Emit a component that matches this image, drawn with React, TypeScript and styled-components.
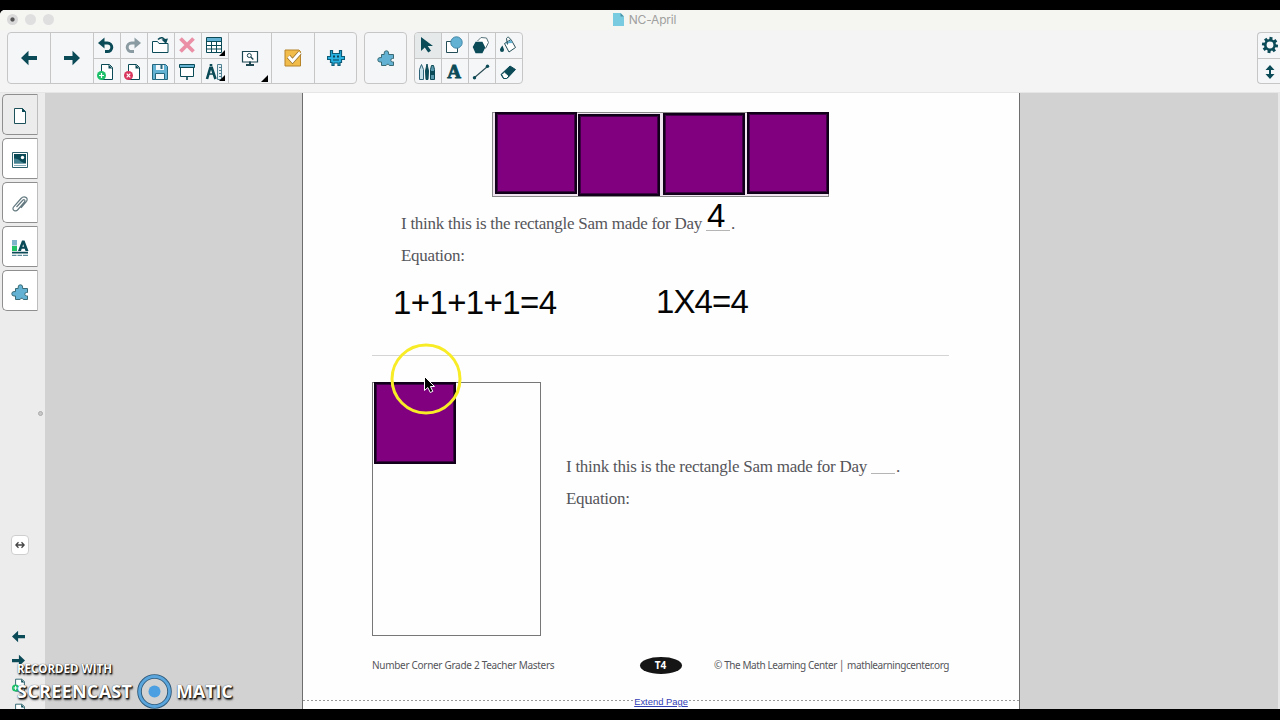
import React from "react";
import styled, { createGlobalStyle } from "styled-components";

const INK = "#0b4a57";
const BLUE = "#63b2d4";

const GlobalStyle = createGlobalStyle`
  * { box-sizing: border-box; }
  body { margin: 0; background: #000; overflow: hidden; }
`;

const Screen = styled.div`
  position: relative;
  width: 1280px;
  height: 720px;
  padding: 10px 0 11px;
  background: #000;
  font-family: "Liberation Sans", Arial, sans-serif;
`;

const Window = styled.div`
  height: 699px;
  display: flex;
  flex-direction: column;
  background: #f4f4f4;
  border-radius: 5px 0 0 0;
  overflow: hidden;
`;

const TitleBar = styled.header`
  height: 20px;
  flex: none;
  display: grid;
  grid-template-columns: 1fr auto 1fr;
  align-items: center;
  background: #f5f6f2;
`;

const TrafficLights = styled.div`
  display: flex;
  gap: 7px;
  padding: 0 0 2px 7px;
`;

const Light = styled.span<{ $dot?: boolean }>`
  width: 11px;
  height: 11px;
  border-radius: 50%;
  background: ${(p) =>
    p.$dot ? "radial-gradient(circle, #555 0 1.6px, #d9d9d9 2.6px)" : "#dfdfdf"};
`;

const Title = styled.div`
  display: flex;
  align-items: center;
  gap: 5px;
  padding: 0 0 2px 9px;
  color: #a0a09e;
  font: 12px Inter, sans-serif;
  letter-spacing: -0.2px;
`;

const Toolbar = styled.div`
  height: 62px;
  flex: none;
  display: flex;
  align-items: flex-start;
  padding: 2px 0 0 7px;
  background: #f4f4f4;
`;

const Group = styled.div<{ $ml?: string; $open?: boolean }>`
  display: flex;
  height: 52px;
  margin-left: ${(p) => p.$ml ?? "0"};
  margin-right: ${(p) => (p.$open ? "-4px" : "0")};
  border: 1px solid #c6c6c6;
  border-right-width: ${(p) => (p.$open ? 0 : "1px")};
  border-radius: ${(p) => (p.$open ? "4px 0 0 4px" : "4px")};
  background: #f5f6f8;
  overflow: hidden;
`;

const Cell = styled.button<{ $w: number }>`
  position: relative;
  width: ${(p) => p.$w}px;
  flex: 1 0 auto;
  padding: 0 1px 0 0;
  border: 0;
  border-right: 1px solid #c6c6c6;
  background: transparent;
  display: grid;
  place-items: center;
  &:last-child { border-right: 0; padding: 0; }
`;

const Stack = styled.div`
  width: 27px;
  display: grid;
  grid-template-rows: 26px 24px;
  border-right: 1px solid #c6c6c6;
  &:last-child { border-right: 0; width: 26px; }
`;

const SmallCell = styled.button<{ $active?: boolean }>`
  position: relative;
  padding: 2px 2px 0 0;
  border: 0;
  background: ${(p) => (p.$active ? "#e6e9e9" : "transparent")};
  display: grid;
  place-items: center;
  &:first-child {
    padding-top: 0;
    padding-bottom: 1px;
    border-bottom: 1px solid #c6c6c6;
  }
`;

const Corner = styled.i<{ $size?: number }>`
  position: absolute;
  right: 3px;
  bottom: ${(p) => (p.$size ? 1 : 2)}px;
  width: ${(p) => p.$size ?? 6}px;
  height: ${(p) => p.$size ?? 6}px;
  background: #000;
  clip-path: polygon(100% 0, 100% 100%, 0 100%);
`;

const Body = styled.div`
  flex: 1;
  min-height: 0;
  display: flex;
  border-top: 1px solid #e6e6e6;
`;

const Sidebar = styled.aside`
  width: 45px;
  flex: none;
  display: flex;
  flex-direction: column;
  background: #ececec;
  padding: 1px 0 0 2px;
`;

const Tab = styled.button<{ $active?: boolean }>`
  width: 36px;
  height: 41px;
  flex: none;
  margin-bottom: 3px;
  padding: 2px 0 0 0;
  border: 1px solid #8f8f8f;
  border-right-color: #bdbdbd;
  border-radius: 5px 0 0 5px;
  background: ${(p) => (p.$active ? "#ececec" : "#fff")};
  display: grid;
  place-items: center;
`;

const Grip = styled.i`
  width: 5px;
  height: 5px;
  margin: 97px 0 0 36px;
  border: 1px solid #aaa;
  border-radius: 50%;
  background: #c8c8c8;
`;

const WidthToggle = styled.button`
  width: 18px;
  height: 20px;
  flex: none;
  margin: 119px 0 0 9px;
  padding: 0;
  border: 1px solid #cfcfcf;
  border-radius: 4px;
  background: #fff;
  display: grid;
  place-items: center;
`;

const PageActions = styled.div`
  display: flex;
  flex-direction: column;
  gap: 11px;
  margin: 75px 0 0 10px;
  height: 79px;
  overflow: hidden;
  svg { flex: none; }
`;

const Desk = styled.main`
  flex: 1;
  display: flex;
  background: #d2d2d2;
  border-right: 2px solid #e8e8e8;
`;

const Page = styled.article`
  position: relative;
  width: 718px;
  margin-left: 257px;
  flex: none;
  background: #fefefe;
  border-left: 1px solid #6e6e6e;
  border-right: 1px solid #6e6e6e;
  padding: 19px 70px 0 69px;
  display: flex;
  flex-direction: column;
`;

const StripFrame = styled.div`
  display: flex;
  align-items: flex-start;
  width: 337px;
  height: 85px;
  margin-left: 120px;
  border: 1px solid #8a8a8a;
  background: #efe4ef;
  padding-left: 2px;
`;

const Tile = styled.div<{ $mt?: number; $ml?: number }>`
  flex: none;
  width: 82px;
  height: 82px;
  margin: ${(p) => p.$mt ?? 0}px 0 0 ${(p) => p.$ml ?? 0}px;
  border: 2px solid #12001a;
  background: #800080;
  box-shadow: inset 0 0 0 1px #3d0042;
`;

const Serif = styled.p`
  margin: 0;
  height: 32px;
  line-height: 32px;
  white-space: nowrap;
  color: #55555a;
  font-family: "Liberation Serif", "Times New Roman", serif;
  font-size: 17px;
  letter-spacing: -0.26px;
`;

const Prompt = styled.div<{ $ml?: number; $mt?: number }>`
  margin: ${(p) => p.$mt ?? 0}px 0 0 ${(p) => p.$ml ?? 0}px;
`;

const Blank = styled.span`
  position: relative;
  display: inline-block;
  width: 24px;
  height: 18px;
  margin: 0 1px 0 0;
  vertical-align: -2px;
  border-bottom: 1px solid #b5b5b5;
`;

const Answer = styled.span`
  position: absolute;
  left: 1px;
  bottom: -1px;
  color: #000;
  font: 33px/30px "Liberation Sans", Arial, sans-serif;
`;

const Equations = styled.div`
  display: flex;
  height: 38px;
  margin: 12px 0 0 21px;
  color: #050505;
  font-size: 33px;
  line-height: 38px;
  white-space: nowrap;
`;

const Equation = styled.span<{ $spacing: number; $w?: number; $up?: number }>`
  width: ${(p) => (p.$w ? `${p.$w}px` : "auto")};
  letter-spacing: ${(p) => p.$spacing}px;
  margin-top: -${(p) => p.$up ?? 0}px;
`;

const Rule = styled.hr`
  width: 577px;
  height: 1px;
  flex: none;
  margin: 33px 0 0;
  border: 0;
  background: #d4d4d4;
`;

const Problem = styled.section`
  display: flex;
  margin-top: 26px;
`;

const TallFrame = styled.div`
  width: 169px;
  height: 254px;
  flex: none;
  border: 1px solid #777;
`;

const Footer = styled.footer`
  display: grid;
  grid-template-columns: 1fr 42px 1fr;
  align-items: center;
  height: 18px;
  margin-top: 20px;
  width: 577px;
  color: #55555a;
  font: 10px "Noto Sans", sans-serif;
  white-space: nowrap;
`;

const FootLeft = styled.span`
  letter-spacing: -0.3px;
`;

const FootRight = styled.span`
  text-align: right;
  letter-spacing: -0.42px;
`;

const Badge = styled.span`
  height: 17px;
  border-radius: 50%;
  background: #151515;
  color: #fff;
  font-weight: 700;
  font-size: 10px;
  line-height: 17px;
  text-align: center;
`;

const Extend = styled.div`
  display: flex;
  align-items: center;
  gap: 1px;
  height: 14px;
  margin: 21px -70px 0 -69px;
  color: #3341b5;
  font-size: 9.4px;
  line-height: 14px;
  text-decoration: underline;
  &::before, &::after {
    content: "";
    flex: 1;
    height: 1px;
    margin-bottom: 3px;
    background: repeating-linear-gradient(90deg, #999 0 2px, transparent 2px 4px);
  }
`;

const Pointer = styled.svg`
  position: absolute;
  left: 389px;
  top: 342px;
`;

const Watermark = styled.div`
  position: absolute;
  left: 17px;
  top: 661px;
  color: #fff;
  font-family: "Open Sans", "Noto Sans", sans-serif;
  font-weight: 700;
  text-shadow: 1px 1px 1px #111, 1px 2px 2px #333, 0 0 1px #333;
  white-space: nowrap;
`;

const MarkTop = styled.div`
  height: 15px;
  font-size: 11.5px;
  line-height: 15px;
`;

const MarkRow = styled.div`
  display: flex;
  align-items: center;
  height: 34px;
  margin-top: -2px;
  font-size: 18px;
  line-height: 34px;
`;

const MarkWord = styled.span<{ $w: number; $spacing: number }>`
  width: ${(p) => p.$w}px;
  letter-spacing: ${(p) => p.$spacing}px;
`;

const Ring = styled.svg`
  margin: 0 4px 0 3px;
`;

const Drawing = styled.svg`
  display: block;
`;

const Svg = ({
  w = 18,
  h = 18,
  scale = 1,
  children,
}: {
  w?: number;
  h?: number;
  scale?: number;
  children: React.ReactNode;
}) => (
  <Drawing width={w * scale} height={h * scale} viewBox={`0 0 ${w} ${h}`} fill="none">
    {children}
  </Drawing>
);

const ArrowLeft = ({ s = 16 }: { s?: number }) => (
  <Drawing width={s} height={s} viewBox="0 0 16 16">
    <path d="M0 8 7.5 0.8V6H16v4H7.5v5.2z" fill={INK} />
  </Drawing>
);
const ArrowRight = ({ s = 16 }: { s?: number }) => (
  <Drawing width={s} height={s} viewBox="0 0 16 16">
    <path d="M16 8 8.5 0.8V6H0v4h8.5v5.2z" fill={INK} />
  </Drawing>
);
const Undo = () => (
  <Svg w={16} h={17}>
    <path d="M5 6h4.5a4.2 4.2 0 0 1 0 8.6H7" stroke={INK} strokeWidth="3" />
    <path d="M0 6 6.5 0.5v11z" fill={INK} />
  </Svg>
);
const Redo = () => (
  <Svg w={16} h={17}>
    <path d="M11 6H6.5a4.2 4.2 0 0 0 0 8.6H9" stroke="#8b9ba2" strokeWidth="3" />
    <path d="M16 6 9.5 0.5v11z" fill="#8b9ba2" />
  </Svg>
);
const OpenFile = () => (
  <Svg>
    <path d="M1.5 16.5v-11h5l1.5 2h9v9z" fill="#fff" stroke={INK} />
    <path d="M7 3.5c3-3 6-2 7 1.500" stroke={INK} strokeWidth="1.6" />
    <path d="m10.5 3.500 6.5-1-2 5.500z" fill={INK} />
  </Svg>
);
const Cross = () => (
  <Svg w={16} h={16}>
    <path d="m1.5 1.500 13 13m0-13-13 13" stroke="#ea8fa6" strokeWidth="3.800" />
  </Svg>
);
const TableIcon = () => (
  <Svg>
    <path d="M1.500 1.500h15v15h-15z" fill="#fff" stroke={INK} />
    <path d="M2 2h14v3.500H2z" fill={BLUE} />
    <path d="M1.500 5.500h15m-15 4h15m-15 3.500h15M6.500 5.500v11m5-11v11" stroke={INK} />
  </Svg>
);
const PageShape = () => (
  <>
    <path d="M4.500 1.500h8l3 3v12h-11z" fill="#fff" stroke={INK} />
    <path d="M11.500 1.500v4h4z" fill={INK} />
  </>
);
const PageAdd = ({ scale }: { scale?: number }) => (
  <Svg scale={scale}>
    <PageShape />
    <circle cx="4.500" cy="12.500" r="4.500" fill="#1fc06a" />
    <path d="M4.500 10v5M2 12.500h5" stroke="#fff" strokeWidth="1.200" />
  </Svg>
);
const PageDelete = ({ scale }: { scale?: number }) => (
  <Svg scale={scale}>
    <PageShape />
    <circle cx="4.500" cy="12.500" r="4.500" fill="#d8365c" />
    <path d="m2.700 10.700 3.600 3.600m0-3.600-3.600 3.600" stroke="#fff" strokeWidth="1.200" />
  </Svg>
);
const Save = () => (
  <Svg>
    <path d="M1.500 1.500h13l2 2v13h-15z" fill={BLUE} stroke="#25667f" />
    <path d="M5 2h8v5H5z" fill="#f4f8fa" />
    <path d="M9.500 2h2v4h-2z" fill="#25667f" />
    <path d="M4.500 10.500h9v6h-9z" fill="#f4f8fa" stroke="#25667f" />
  </Svg>
);
const Projector = () => (
  <Svg>
    <path d="M2.500 4.500h13v9h-13z" fill="#fff" stroke={INK} />
    <path d="M1.500 1.500h15v3h-15z" fill={BLUE} stroke={INK} />
    <path d="M9 13v4" stroke={INK} strokeWidth="1.600" />
  </Svg>
);
const Compass = () => (
  <Svg w={19}>
    <path d="M6 1v2.500M5.500 4 2 16M6.500 4l4 12" stroke={INK} strokeWidth="2.600" />
    <path d="M3.500 11h5" stroke={INK} strokeWidth="1.300" />
    <path d="M12.500 1.500h4v15h-4z" fill="#e9f1f4" stroke="#4f8193" />
    <path d="M14 4.500h2m-2 3h2m-2 3h2m-2 3h2" stroke="#4f8193" />
  </Svg>
);
const Monitor = () => (
  <Svg>
    <path d="M1.500 2.500h15v10.500h-15z" fill="#fff" stroke="#1c4650" strokeWidth="1.200" />
    <circle cx="8.300" cy="6.500" r="2" stroke="#1c4650" />
    <path d="m9.800 8 2.500 2.500" stroke="#1c4650" strokeWidth="1.400" />
    <path d="M9 12.500v3m-4 .5h8" stroke="#1c4650" strokeWidth="2" />
  </Svg>
);
const CheckBox = () => (
  <Svg>
    <path d="M1 1h14l1.500 1.500V17H1z" fill="#f2bc4b" stroke="#b7842a" />
    <path d="m4.500 7.500 4 4.500L16 3.500" stroke="#94702c" strokeWidth="4.400" />
    <path d="m4.500 7.500 4 4.500L16 3.500" stroke="#fff" strokeWidth="3" />
  </Svg>
);
const Monster = () => (
  <Svg>
    <path
      d="M3.500 1.500h2v3h7v-3h2v6h3v3h-3v3h-1.500v3h-2v-2.500H7v2.500H5v-3H3.500v-3h-3v-3h3z"
      fill="#28b2e2"
      stroke="#0d5c78"
      strokeWidth="1.200"
    />
    <path d="M6 6.500h2v2H6zm4 0h2v2h-2z" fill="#0b4258" />
    <path d="M6 11h6" stroke="#0b4258" />
  </Svg>
);
const Puzzle = () => (
  <Svg>
    <path
      d="M4.500 5.500h2.700v-1.500a2.200 2.200 0 1 1 4.400 0v1.500h4.900v4h-1a1.700 1.700 0 1 0 0 3.400h1v3.600h-4.200l-.8-1.200h-1.600l-.8 1.200H4.500v-3.500H3a2.200 2.200 0 1 1 0-4.400h1.500z"
      fill={BLUE}
      stroke="#3a6b75"
    />
  </Svg>
);
const Cursor = () => (
  <Svg w={14} h={16}>
    <path d="M1 0v14l3.800-3.600 3.400 5.200 2.800-1.900-3.300-4.700H13z" fill={INK} />
  </Svg>
);
const Shapes = () => (
  <Svg>
    <path d="M1.500 5.500h11v11h-11z" fill="#fff" stroke="#244e57" />
    <circle cx="11.500" cy="6.500" r="5.700" fill={BLUE} stroke="#4286a4" />
  </Svg>
);
const Polygons = () => (
  <Svg>
    <path d="m5.500 5 3.500-3.500 5.500.5 2 4.500-3 6" fill="#fff" stroke="#57737a" />
    <path d="m1.500 11 2.500-4.500h6l2.500 5-2.500 5H4z" fill={INK} stroke={INK} strokeWidth="1.400" />
  </Svg>
);
const Bucket = () => (
  <Svg>
    <path d="m5.500 7.500 6.500-4 4.500 8-6.500 4.500z" fill="#fff" stroke="#244e57" />
    <path d="m6 7.500 6-3.500 1.500 3z" fill={BLUE} />
    <path d="M8.500 8.500 7.500 2.500c1-2 3-1.500 3.500.5" stroke="#244e57" />
    <path d="M3.500 9.500c-1.500 2-2.500 3-2.500 4.500a2 2 0 0 0 4 0c0-1.500-1-2.500-1.500-4.500z" fill={INK} />
  </Svg>
);
const Pens = () => (
  <Svg>
    <path d="M1.500 16.500v-10l2-5 2 5v10z" fill="#c7dfe9" stroke="#2c6377" />
    <path d="M7.500 8 9 1l1.500 7-.5 8.500H8z" fill={INK} stroke={INK} />
    <path d="M12.500 16.500v-10l1-4h2l1 4v10z" fill="#5a98ae" stroke={INK} />
    <path d="M12.500 8h4v4h-4z" fill={INK} />
  </Svg>
);
const LetterA = styled.span`
  color: ${INK};
  font: 700 19px/18px "Liberation Serif", serif;
  -webkit-text-stroke: 0.9px ${INK};
`;
const LineIcon = () => (
  <Svg>
    <path d="M2 15 16 3" stroke="#294b53" strokeWidth="1.100" />
    <circle cx="2.500" cy="14.700" r="1.700" fill={INK} />
    <circle cx="15.500" cy="3.300" r="1.700" fill={INK} />
  </Svg>
);
const Eraser = () => (
  <Svg>
    <path d="m2 11.500 9-8.500 5.500 3.500-8.500 9H4.500z" fill={INK} stroke={INK} />
    <path d="m2.500 11.500 3-2.500 4.500 4-2.500 2.500H4.800z" fill="#fff" stroke={INK} />
  </Svg>
);
const Gear = () => (
  <Svg>
    {[0, 45, 90, 135].map((a) => (
      <path key={a} d="M9 1v16" stroke={INK} strokeWidth="3" transform={`rotate(${a + 8} 9 9)`} />
    ))}
    <circle cx="9" cy="9" r="4.700" fill="#f5f6f8" stroke={INK} strokeWidth="2.600" />
  </Svg>
);
const UpDown = () => (
  <Svg w={10} h={14}>
    <path d="M5 3v8" stroke={INK} strokeWidth="2" />
    <path d="m5 0 4.500 5h-9zM5 14l4.500-5h-9z" fill={INK} />
  </Svg>
);
const LeftRight = () => (
  <Svg w={10} h={8}>
    <path d="M1 4h8M3.500 1.200.8 4l2.700 2.800M6.500 1.200 9.200 4 6.500 6.800" stroke="#444" strokeWidth="1.300" />
  </Svg>
);
const SidePage = () => (
  <Svg w={14} h={18}>
    <path d="M1.500 1.500h8l3 3v12h-11z" fill="#fff" stroke="#1f515b" />
    <path d="M9 1v4h4z" fill={INK} />
  </Svg>
);
const Gallery = () => (
  <Svg>
    <path d="M1.500 1.500h15v15h-15z" fill="#fff" stroke="#2c606d" />
    <path d="M3 3h12v9.500H3z" fill={INK} />
    <path d="M3 7.500c4-.5 6 3 11 5H3z" fill="#69a6b8" opacity=".6" />
    <circle cx="11.500" cy="6.500" r="1.700" fill="#fff" />
    <path d="M3 14.500h12" stroke="#84aebb" />
  </Svg>
);
const Clip = () => (
  <Svg>
    <path
      d="m5.500 12 6-6.500c1.700-1.700 3.300-.2 2 1.300l-6.500 7.700c-2.500 3-6.500.5-4.500-2.500l7.500-8.500c3-3.200 8-.8 5.500 2.800l-5.500 6.500"
      stroke="#647a80"
      strokeWidth="1.200"
    />
  </Svg>
);
const TextStyle = () => (
  <Svg>
    <path d="M1 1h5v5.500H1z" fill="#7fb4ca" />
    <path d="M1 7h5v5H1z" fill="#20c264" />
    <path d="m7 12 4-10.500h2.500l4 10.500h-3l-.8-2.200h-3L10 12zm4.400-4.200H13l-.8-2.600z" fill={INK} />
    <path d="M1 13.700h16" stroke={INK} strokeWidth="1.800" />
    <path d="M1 16.300h4.500m1 0H11m1 0h5" stroke="#5b8c9b" strokeWidth="1.300" />
  </Svg>
);

const pairs: [React.ReactNode, React.ReactNode, boolean?][] = [
  [<Undo />, <PageAdd />],
  [<Redo />, <PageDelete />],
  [<OpenFile />, <Save />],
  [<Cross />, <Projector />],
  [<TableIcon />, <Compass />, true],
];

const drawPairs: [React.ReactNode, React.ReactNode][] = [
  [<Cursor />, <Pens />],
  [<Shapes />, <LetterA>A</LetterA>],
  [<Polygons />, <LineIcon />],
  [<Bucket />, <Eraser />],
];

export default function App() {
  return (
    <Screen>
      <GlobalStyle />
      <Window>
        <TitleBar>
          <TrafficLights>
            <Light $dot />
            <Light />
            <Light />
          </TrafficLights>
          <Title>
            <Svg w={11} h={13}>
              <path d="M0 0h7.500L11 3.500V13H0z" fill="#79cce0" />
              <path d="M7.500 0v3.500H11z" fill="#4b94a8" />
            </Svg>
            NC-April
          </Title>
          <span />
        </TitleBar>
        <Toolbar>
          <Group>
            <Cell $w={43}><ArrowLeft /></Cell>
            <Cell $w={43}><ArrowRight /></Cell>
            {pairs.map(([top, bottom, menu], i) => (
              <Stack key={i}>
                <SmallCell>{top}{menu && <Corner />}</SmallCell>
                <SmallCell>{bottom}{menu && <Corner />}</SmallCell>
              </Stack>
            ))}
            <Cell $w={43}><Monitor /><Corner $size={7} /></Cell>
            <Cell $w={43}><CheckBox /></Cell>
            <Cell $w={41}><Monster /></Cell>
          </Group>
          <Group $ml="7px">
            <Cell $w={41}><Puzzle /></Cell>
          </Group>
          <Group $ml="7px">
            {drawPairs.map(([top, bottom], i) => (
              <Stack key={i}>
                <SmallCell $active={i === 0}>{top}</SmallCell>
                <SmallCell>{bottom}</SmallCell>
              </Stack>
            ))}
          </Group>
          <Group $ml="auto" $open>
            <Stack>
              <SmallCell><Gear /></SmallCell>
              <SmallCell><UpDown /></SmallCell>
            </Stack>
          </Group>
        </Toolbar>
        <Body>
          <Sidebar>
            <Tab $active><SidePage /></Tab>
            <Tab><Gallery /></Tab>
            <Tab><Clip /></Tab>
            <Tab><TextStyle /></Tab>
            <Tab><Puzzle /></Tab>
            <Grip />
            <WidthToggle><LeftRight /></WidthToggle>
            <PageActions>
              <ArrowLeft s={13} />
              <ArrowRight s={13} />
              <PageAdd scale={0.8} />
              <PageDelete scale={0.8} />
            </PageActions>
          </Sidebar>
          <Desk>
            <Page>
              <StripFrame>
                <Tile $mt={-1} />
                <Tile $mt={1} $ml={1} />
                <Tile $ml={3} />
                <Tile $ml={2} $mt={-1} />
              </StripFrame>
              <Prompt $ml={29} $mt={11}>
                <Serif>
                  I think this is the rectangle Sam made for Day{" "}
                  <Blank><Answer>4</Answer></Blank>.
                </Serif>
                <Serif>Equation:</Serif>
              </Prompt>
              <Equations>
                <Equation $spacing={-0.6} $w={263}>1+1+1+1=4</Equation>
                <Equation $spacing={-0.9} $up={1}>1X4=4</Equation>
              </Equations>
              <Rule />
              <Problem>
                <TallFrame>
                  <Tile $mt={-1} $ml={1} />
                </TallFrame>
                <Prompt $ml={25} $mt={69}>
                  <Serif>
                    I think this is the rectangle Sam made for Day <Blank />.
                  </Serif>
                  <Serif>Equation:</Serif>
                </Prompt>
              </Problem>
              <Footer>
                <FootLeft>Number Corner Grade 2 Teacher Masters</FootLeft>
                <Badge>T4</Badge>
                <FootRight>© The Math Learning Center │ mathlearningcenter.org</FootRight>
              </Footer>
              <Extend>Extend Page</Extend>
            </Page>
          </Desk>
        </Body>
      </Window>
      <Pointer width="74" height="74" viewBox="0 0 74 74" fill="none">
        <circle cx="37" cy="37" r="34" stroke="#f8ec27" strokeWidth="3" />
        <path d="M35.500 34.500v14l3.300-3 2.500 5 2.500-1.200-2.400-4.800H45.500z" fill="#000" stroke="#fff" />
      </Pointer>
      <Watermark>
        <MarkTop>RECORDED WITH</MarkTop>
        <MarkRow>
          <MarkWord $w={117} $spacing={0.3}>SCREENCAST</MarkWord>
          <Ring width="35" height="35" viewBox="0 0 35 35" fill="none">
            <circle cx="17.500" cy="17.500" r="15" stroke="#2d5878" strokeWidth="4.600" />
            <circle cx="17.500" cy="17.500" r="15" stroke="#5aa5dc" strokeWidth="2.800" />
            <circle cx="17.500" cy="17.500" r="6" fill="#4c9fe0" />
          </Ring>
          <MarkWord $w={60} $spacing={-0.1}>MATIC</MarkWord>
        </MarkRow>
      </Watermark>
    </Screen>
  );
}
